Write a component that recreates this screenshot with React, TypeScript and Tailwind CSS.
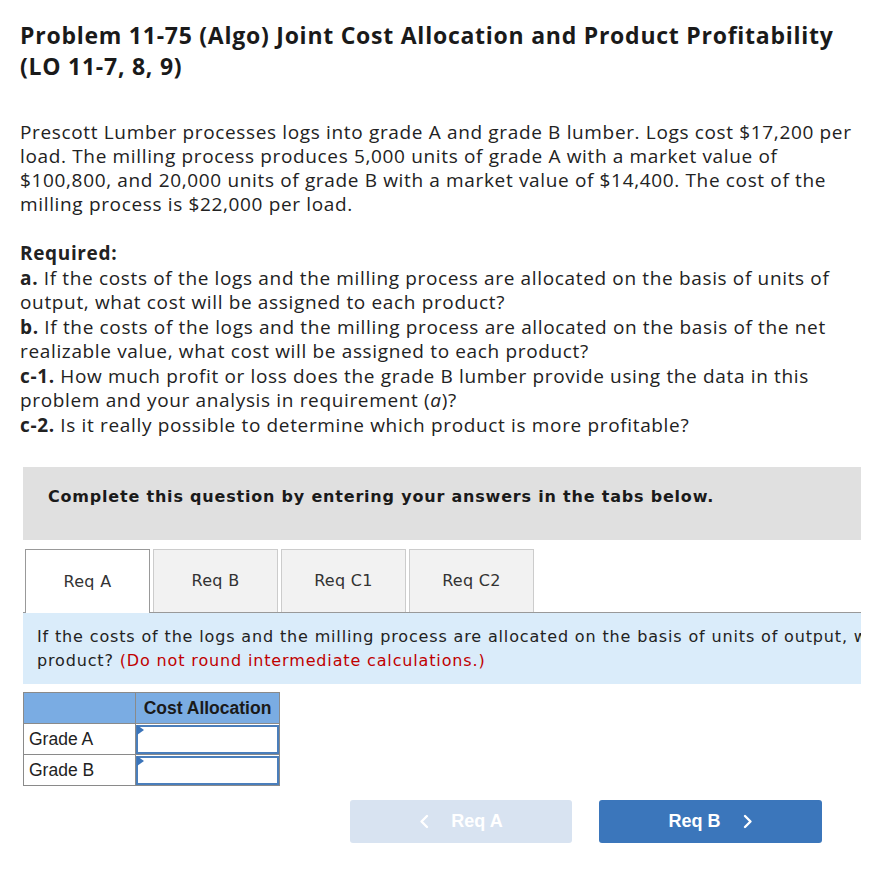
import React from 'react';

const tabs = ['Req A', 'Req B', 'Req C1', 'Req C2'];

const Chevron: React.FC<{ dir: 'left' | 'right' }> = ({ dir }) => (
  <svg width="10" height="15" viewBox="0 0 10 15" fill="none" stroke="currentColor" strokeWidth="2.4" strokeLinecap="round" strokeLinejoin="round">
    {dir === 'left' ? <path d="M8 2 L2.5 7.5 L8 13" /> : <path d="M2 2 L7.5 7.5 L2 13" />}
  </svg>
);

const InputCell: React.FC = () => (
  <td className="relative h-[31px] w-[144px] border border-[#8a8a8a] p-0">
    <div className="h-[29px] w-full border-2 border-[#4a7ebb] bg-white" />
    <div className="absolute left-[1px] top-[1px] h-0 w-0 border-y-[5px] border-l-[7px] border-y-transparent border-l-[#3b74b9]" />
  </td>
);

const Line: React.FC<{ children: React.ReactNode }> = ({ children }) => (
  <div className="whitespace-nowrap">{children}</div>
);

export default function App() {
  return (
    <div className="min-h-[877px] w-[892px] overflow-hidden bg-white text-[#1a1a1a]">
      {/* Header + problem text */}
      <div className="px-5 pt-[20px] font-['Open_Sans',sans-serif]">
        <h1 className="text-[23px] font-bold leading-[31px] tracking-[0.75px] text-[#1a1a1a]">
          <Line>Problem 11-75 (Algo) Joint Cost Allocation and Product Profitability</Line>
          <Line>(LO 11-7, 8, 9)</Line>
        </h1>
        <div className="mt-[38px] text-[19px] leading-[24px] tracking-[0.65px] text-[#222]">
          <Line>Prescott Lumber processes logs into grade A and grade B lumber. Logs cost $17,200 per</Line>
          <Line>load. The milling process produces 5,000 units of grade A with a market value of</Line>
          <Line>$100,800, and 20,000 units of grade B with a market value of $14,400. The cost of the</Line>
          <Line>milling process is $22,000 per load.</Line>
        </div>
        <div className="mt-[25px] text-[19px] leading-[24.5px] tracking-[0.65px] text-[#222]">
          <Line><span className="font-bold">Required:</span></Line>
          <Line><span className="font-bold">a.</span> If the costs of the logs and the milling process are allocated on the basis of units of</Line>
          <Line>output, what cost will be assigned to each product?</Line>
          <Line><span className="font-bold">b.</span> If the costs of the logs and the milling process are allocated on the basis of the net</Line>
          <Line>realizable value, what cost will be assigned to each product?</Line>
          <Line><span className="font-bold">c-1.</span> How much profit or loss does the grade B lumber provide using the data in this</Line>
          <Line>problem and your analysis in requirement (<i>a</i>)?</Line>
          <Line><span className="font-bold">c-2.</span> Is it really possible to determine which product is more profitable?</Line>
        </div>
      </div>

      {/* Question area */}
      <div className="ml-[23px] mt-[30px] w-[838px]">
        <div className="h-[73px] whitespace-nowrap bg-[#e0e0e0] px-[25px] pt-[20px] font-['DejaVu_Sans',sans-serif] text-[16px] font-bold leading-[19px] tracking-[0.8px] text-[#1a1a1a]">
          Complete this question by entering your answers in the tabs below.
        </div>

        {/* Tabs */}
        <div className="mt-[9px] flex items-end border-b border-[#999] pl-[2px] font-['DejaVu_Sans',sans-serif] text-[16px] tracking-[0.3px] text-[#333]">
          {tabs.map((t, i) => (
            <div
              key={t}
              className={
                i === 0
                  ? 'relative -mb-px flex h-[64px] w-[125px] items-center justify-center border border-b-0 border-[#999] bg-white'
                  : 'ml-[3px] flex h-[63px] w-[125px] items-center justify-center border border-b-0 border-[#ccc] bg-[#f2f2f2]'
              }
            >
              {t}
            </div>
          ))}
        </div>

        <div className="h-[71px] overflow-hidden whitespace-nowrap bg-[#daecfa] px-[14px] pt-[12px] font-['DejaVu_Sans',sans-serif] text-[16px] leading-[24px] tracking-[0.85px] text-[#222]">
          <div>If the costs of the logs and the milling process are allocated on the basis of units of output, what cost will be assigned to each</div>
          <div>
            product? <span className="text-[#c00000]">(Do not round intermediate calculations.)</span>
          </div>
        </div>

        {/* Answer table */}
        <table className="mt-[8px] border-collapse font-['Liberation_Sans',sans-serif] text-[17.5px] text-[#222]">
          <tbody>
            <tr className="h-[31px] bg-[#7aace3]">
              <td className="w-[112px] border border-[#8a8a8a]" />
              <td className="w-[144px] border border-[#8a8a8a] text-center font-bold text-[#1a1a1a]">Cost Allocation</td>
            </tr>
            <tr>
              <td className="h-[31px] border border-[#8a8a8a] px-[5px]">Grade A</td>
              <InputCell />
            </tr>
            <tr>
              <td className="h-[31px] border border-[#8a8a8a] px-[5px]">Grade B</td>
              <InputCell />
            </tr>
          </tbody>
        </table>

        {/* Navigation */}
        <div className="mt-[14px] flex pl-[327px] font-['Liberation_Sans',sans-serif] text-[18px] font-bold text-white">
          <button className="flex h-[43px] w-[222px] items-center justify-center gap-[22px] rounded-[3px] bg-[#d8e3f1]">
            <Chevron dir="left" />
            <span>Req A</span>
          </button>
          <button className="ml-[27px] flex h-[43px] w-[223px] items-center justify-center gap-[22px] rounded-[3px] bg-[#3b76bb]">
            <span>Req B</span>
            <Chevron dir="right" />
          </button>
        </div>
      </div>
    </div>
  );
}
